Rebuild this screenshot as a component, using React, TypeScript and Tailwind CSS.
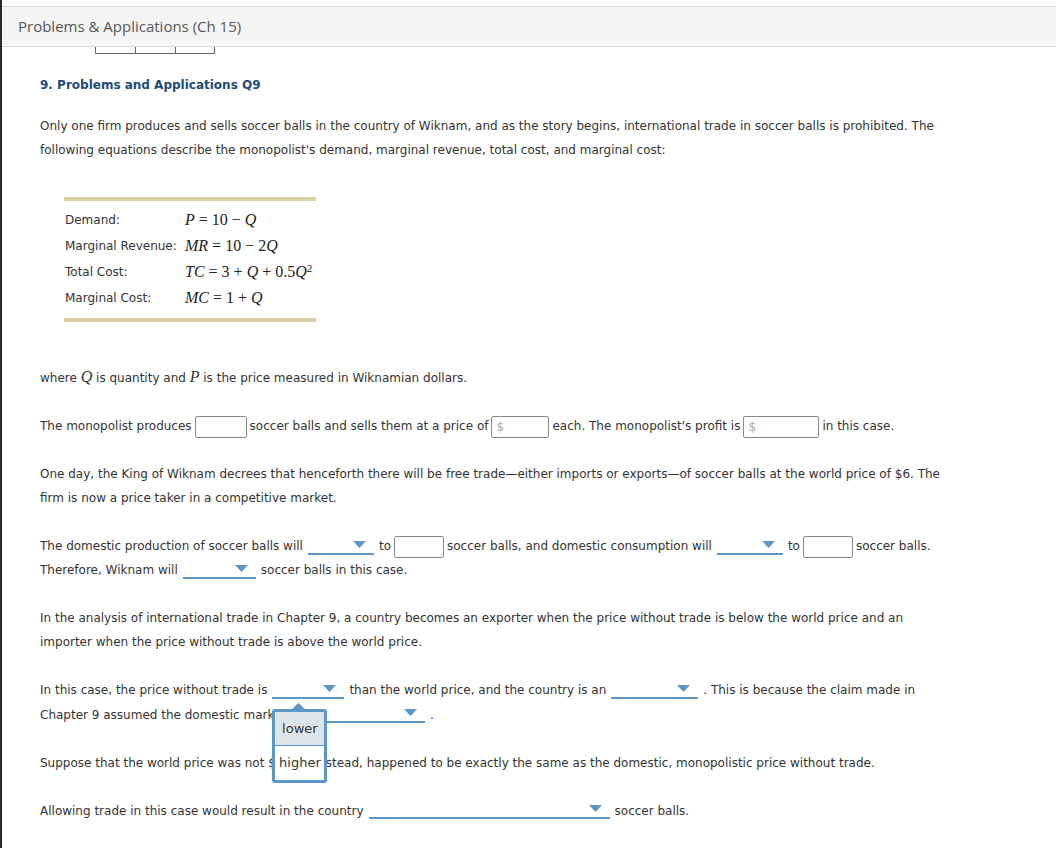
import React from "react";

const Box = ({ w, dollar = false }: { w: number; dollar?: boolean }) => (
  <span
    className="inline-flex items-center align-middle h-[22px] border border-[#8a8a8a] rounded-[2px] bg-white pl-[4px] text-[12px] text-[#aaa] mx-[3px]"
    style={{ width: w }}
  >
    {dollar ? "$" : ""}
  </span>
);

const Drop = ({ w }: { w: number }) => (
  <span
    className="relative inline-block align-middle h-[18px] border-b-2 border-[#5b97c7] mx-[5px] -mt-[2px]"
    style={{ width: w }}
  >
    <svg
      className="absolute right-[8px] top-[4px]"
      width="13"
      height="7"
      viewBox="0 0 13 7"
    >
      <polygon points="0,0 13,0 6.5,7" fill="#5b97c7" />
    </svg>
  </span>
);

const V = ({ children }: { children: React.ReactNode }) => (
  <i className="font-['Liberation_Serif',serif] text-[16px]">{children}</i>
);

const Op = ({ children }: { children: React.ReactNode }) => (
  <span className="font-['Liberation_Serif',serif] text-[16px] mx-[4px]">{children}</span>
);

const N = ({ children }: { children: React.ReactNode }) => (
  <span className="font-['Liberation_Serif',serif] text-[16px]">{children}</span>
);

export default function App() {
  const rows: [string, React.ReactNode][] = [
    [
      "Demand:",
      <>
        <V>P</V>
        <Op>=</Op>
        <N>10</N>
        <Op>−</Op>
        <V>Q</V>
      </>,
    ],
    [
      "Marginal Revenue:",
      <>
        <V>MR</V>
        <Op>=</Op>
        <N>10</N>
        <Op>−</Op>
        <N>2</N>
        <V>Q</V>
      </>,
    ],
    [
      "Total Cost:",
      <>
        <V>TC</V>
        <Op>=</Op>
        <N>3</N>
        <Op>+</Op>
        <V>Q</V>
        <Op>+</Op>
        <N>0.5</N>
        <V>Q</V>
        <sup className="font-['Liberation_Serif',serif] text-[11px]">2</sup>
      </>,
    ],
    [
      "Marginal Cost:",
      <>
        <V>MC</V>
        <Op>=</Op>
        <N>1</N>
        <Op>+</Op>
        <V>Q</V>
      </>,
    ],
  ];

  return (
    <div className="min-h-[848px] bg-white border-l-2 border-[#2b2b2b] font-['DejaVu_Sans',sans-serif] text-[12px] text-[#333]">
      {/* page header */}
      <div className="pt-[6px]">
        <div className="h-[41px] bg-[#f5f5f5] border-y border-[#dcdcdc] flex items-center pl-[16px] font-['Open_Sans',sans-serif] text-[15px] text-[#555]">
          Problems &amp; Applications (Ch 15)
        </div>
        <div className="ml-[93px] flex h-[7px]">
          <span className="w-[40px] border-l border-b border-[#666]" />
          <span className="w-[40px] border-l border-b border-[#666]" />
          <span className="w-[40px] border-l border-b border-r border-[#666]" />
        </div>
      </div>

      <div className="pl-[38px] pr-[100px]">
        <h2 className="mt-[19px] leading-[24px] text-[12px] font-bold text-[#1d4b78]">
          9. Problems and Applications Q9
        </h2>

        <p className="mt-[18px] leading-[23.5px]">
          Only one firm produces and sells soccer balls in the country of Wiknam, and as the story begins, international trade in soccer balls is prohibited. The following equations describe the monopolist's demand, marginal revenue, total cost, and marginal cost:
        </p>

        <div className="ml-[24px] mt-[35px] w-[252px] border-t-4 border-b-4 border-[#d9cfa4] pt-[6px] pb-[7px]">
          {rows.map(([label, expr]) => (
            <div key={label} className="flex items-center h-[26px] pl-[1px]">
              <span className="w-[120px] shrink-0">{label}</span>
              <span className="text-[#222] whitespace-nowrap">{expr}</span>
            </div>
          ))}
        </div>

        <p className="mt-[43px] leading-[24px]">
          where <V>Q</V> is quantity and <V>P</V> is the price measured in Wiknamian dollars.
        </p>

        <p className="mt-[24px] leading-[24px]">
          The monopolist produces
          <Box w={52} />
          soccer balls and sells them at a price of
          <Box w={58} dollar />
          each. The monopolist's profit is
          <Box w={76} dollar />
          in this case.
        </p>

        <p className="mt-[24px] leading-[24px]">
          One day, the King of Wiknam decrees that henceforth there will be free trade—either imports or exports—of soccer balls at the world price of $6. The firm is now a price taker in a competitive market.
        </p>

        <p className="mt-[24px] leading-[24px]">
          The domestic production of soccer balls will
          <Drop w={66} />
          to
          <Box w={50} />
          soccer balls, and domestic consumption will
          <Drop w={66} />
          to
          <Box w={50} />
          soccer balls.
          <br />
          Therefore, Wiknam will
          <Drop w={73} />
          soccer balls in this case.
        </p>

        <p className="mt-[24px] leading-[24px]">
          In the analysis of international trade in Chapter 9, a country becomes an exporter when the price without trade is below the world price and an importer when the price without trade is above the world price.
        </p>

        <p className="mt-[24px] leading-[24px]">
          In this case, the price without trade is
          <span className="relative inline-block align-middle">
            <Drop w={72} />
            {/* open option list */}
            <span className="absolute left-[5px] top-[30px] z-10 w-[55px]">
              <svg
                className="absolute left-[19px] -top-[6px]"
                width="15"
                height="7"
                viewBox="0 0 15 7"
              >
                <polygon points="0,7 15,7 7.5,0" fill="#5b97c7" />
              </svg>
              <span className="flex flex-col border-[3px] border-[#5b97c7] rounded-[3px] bg-white text-[13px] text-[#333] leading-none">
                <span className="h-[34px] flex items-center justify-center bg-[#dde5e8] border-b border-[#5b97c7]">
                  lower
                </span>
                <span className="h-[34px] flex items-center justify-center bg-white">
                  higher
                </span>
              </span>
            </span>
          </span>
          than the world price, and the country is an
          <Drop w={87} />
          . This is because the claim made in
          <br />
          Chapter 9 assumed the domestic market
          <Drop w={134} />
          .
        </p>

        <p className="mt-[24px] leading-[24px]">
          Suppose that the world price was not $6 but, instead, happened to be exactly the same as the domestic, monopolistic price without trade.
        </p>

        <p className="mt-[24px] leading-[24px]">
          Allowing trade in this case would result in the country
          <Drop w={241} />
          soccer balls.
        </p>
      </div>
    </div>
  );
}
